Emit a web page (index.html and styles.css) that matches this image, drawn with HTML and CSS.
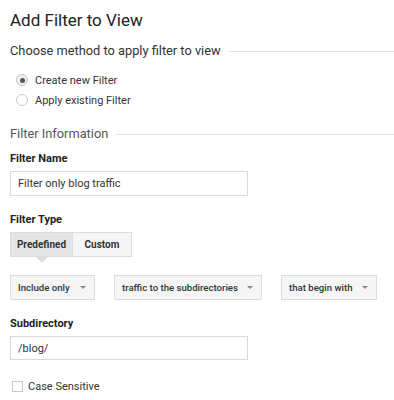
FILE: index.html
```html
<!DOCTYPE html>
<html>
<head>
<meta charset="utf-8">
<link rel="stylesheet" href="styles.css">
</head>
<body>
<div class="page">
  <h1 class="title">Add Filter to View</h1>
  <div class="section s1"><span class="section-title">Choose method to apply filter to view</span><span class="rule"></span></div>
  <div class="radios">
    <div class="radio-row"><span class="radio checked"></span>Create new Filter</div>
    <div class="radio-row"><span class="radio"></span>Apply existing Filter</div>
  </div>
  <div class="section s2"><span class="section-title light">Filter Information</span><span class="rule"></span></div>
  <div class="field-label l1">Filter Name</div>
  <div class="input">Filter only blog traffic</div>
  <div class="field-label l2">Filter Type</div>
  <div class="seg">
    <span class="seg-btn active">Predefined</span>
    <span class="seg-btn">Custom</span>
  </div>
  <div class="dropdowns">
    <div class="dd dd1"><span>Include only</span><span class="caret"></span></div>
    <div class="dd dd2"><span>traffic to the subdirectories</span><span class="caret"></span></div>
    <div class="dd dd3"><span>that begin with</span><span class="caret"></span></div>
  </div>
  <div class="field-label l3">Subdirectory</div>
  <div class="input in2">/blog/</div>
  <div class="check-row"><span class="checkbox"></span>Case Sensitive</div>
</div>
</body>
</html>
```
FILE: styles.css
```css
body {
  margin: 0;
  font-family: Roboto, "Liberation Sans", sans-serif;
  color: #333;
  background: #fff;
}
.page {
  padding: 0 0 0 10px;
}
.title {
  margin: 9px 0 0;
  font-size: 17px;
  line-height: 22px;
  font-weight: 400;
  color: #222;
}
.section {
  display: flex;
  align-items: center;
  gap: 8px;
}
.s1 { margin-top: 12px; }
.s2 { margin-top: 16px; }
.section-title {
  font-size: 12.8px;
  line-height: 16px;
  white-space: nowrap;
  color: #333;
}
.section-title.light { color: #555; }
.rule {
  flex: 1;
  height: 1px;
  background: #e3e3e3;
}
.radios {
  margin-top: 11px;
}
.radio-row {
  display: flex;
  align-items: center;
  height: 20px;
  padding-left: 6px;
  gap: 7px;
  font-size: 11px;
  color: #333;
}
.radio {
  width: 12px;
  height: 12px;
  box-sizing: border-box;
  border-radius: 50%;
  border: 1px solid #ccc;
  background: #fff;
  display: flex;
  align-items: center;
  justify-content: center;
}
.radio.checked {
  border-color: #c4c4c4;
  background: #f0f0f0;
}
.radio.checked::after {
  content: "";
  width: 5px;
  height: 5px;
  border-radius: 50%;
  background: #555;
}
.field-label {
  font-size: 11px;
  line-height: 14px;
  font-weight: 700;
  color: #222;
}
.l1 { margin-top: 10px; }
.l2 { margin-top: 17px; }
.l3 { margin-top: 17px; }
.input {
  margin-top: 5px;
  width: 238px;
  height: 25px;
  box-sizing: border-box;
  border: 1px solid #d9d9d9;
  padding: 0 7px;
  display: flex;
  align-items: center;
  font-size: 11px;
  color: #333;
}
.in2 { margin-top: 5px; height: 24px; }
.seg {
  margin-top: 5px;
  display: flex;
  width: 122px;
  height: 25px;
  box-sizing: border-box;
  border: 1px solid #dcdcdc;
  position: relative;
}
.seg-btn {
  display: flex;
  align-items: center;
  justify-content: center;
  font-size: 10px;
  font-weight: 700;
  color: #333;
  background: #f5f5f5;
}
.seg-btn:first-child { width: 61px; }
.seg-btn:last-child { flex: 1; }
.seg-btn.active {
  background: #e4e4e4;
  border-right: 1px solid #dcdcdc;
  position: relative;
}
.seg-btn.active::after {
  content: "";
  position: absolute;
  left: 25px;
  top: 100%;
  margin-top: 1px;
  border-left: 6px solid transparent;
  border-right: 6px solid transparent;
  border-top: 6px solid #ddd;
}
.dropdowns {
  margin-top: 18px;
  display: flex;
  gap: 19px;
}
.dd {
  height: 25px;
  box-sizing: border-box;
  border: 1px solid #dcdcdc;
  background: #f5f5f5;
  display: flex;
  align-items: center;
  justify-content: space-between;
  padding: 0 8px 0 7px;
  font-size: 9.6px;
  font-weight: 500;
  color: #333;
}
.dd1 { width: 85px; }
.dd2 { width: 148px; }
.dd3 { width: 96px; }
.caret {
  width: 0;
  height: 0;
  border-left: 3px solid transparent;
  border-right: 3px solid transparent;
  border-top: 3px solid #888;
}
.check-row {
  margin-top: 20px;
  display: flex;
  align-items: center;
  gap: 5px;
  padding-left: 2px;
  font-size: 11px;
  color: #333;
}
.checkbox {
  width: 11px;
  height: 11px;
  box-sizing: border-box;
  border: 1px solid #c8c8c8;
  background: #fff;
}
```
